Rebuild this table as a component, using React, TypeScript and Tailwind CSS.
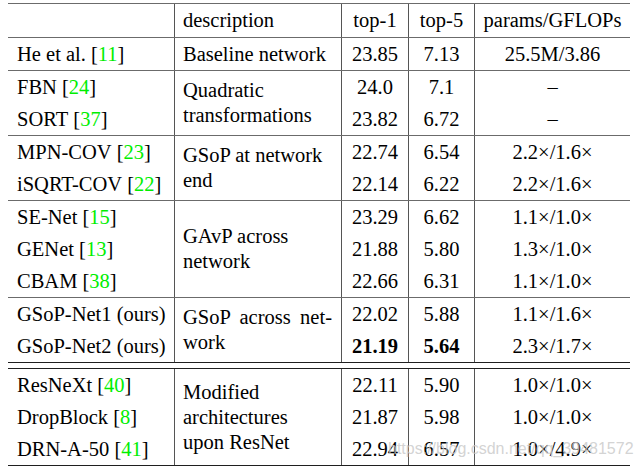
import React from "react";

type Row = {
  name: string;
  cite?: string;
  top1: string;
  top5: string;
  params: string;
  bold?: boolean;
};

type Group = {
  rows: Row[];
  desc: string[];
  justifyFirst?: boolean;
};

const groups: Group[] = [
  {
    rows: [{ name: "He et al.", cite: "11", top1: "23.85", top5: "7.13", params: "25.5M/3.86" }],
    desc: ["Baseline network"],
  },
  {
    rows: [
      { name: "FBN", cite: "24", top1: "24.0", top5: "7.1", params: "–" },
      { name: "SORT", cite: "37", top1: "23.82", top5: "6.72", params: "–" },
    ],
    desc: ["Quadratic", "transformations"],
  },
  {
    rows: [
      { name: "MPN-COV", cite: "23", top1: "22.74", top5: "6.54", params: "2.2×/1.6×" },
      { name: "iSQRT-COV", cite: "22", top1: "22.14", top5: "6.22", params: "2.2×/1.6×" },
    ],
    desc: ["GSoP at network", "end"],
  },
  {
    rows: [
      { name: "SE-Net", cite: "15", top1: "23.29", top5: "6.62", params: "1.1×/1.0×" },
      { name: "GENet", cite: "13", top1: "21.88", top5: "5.80", params: "1.3×/1.0×" },
      { name: "CBAM", cite: "38", top1: "22.66", top5: "6.31", params: "1.1×/1.0×" },
    ],
    desc: ["GAvP across", "network"],
  },
  {
    rows: [
      { name: "GSoP-Net1 (ours)", top1: "22.02", top5: "5.88", params: "1.1×/1.6×" },
      { name: "GSoP-Net2 (ours)", top1: "21.19", top5: "5.64", params: "2.3×/1.7×", bold: true },
    ],
    desc: ["GSoP across net-", "work"],
    justifyFirst: true,
  },
];

const modified: Group = {
  rows: [
    { name: "ResNeXt", cite: "40", top1: "22.11", top5: "5.90", params: "1.0×/1.0×" },
    { name: "DropBlock", cite: "8", top1: "21.87", top5: "5.98", params: "1.0×/1.0×" },
    { name: "DRN-A-50", cite: "41", top1: "22.94", top5: "6.57", params: "1.0×/4.9×" },
  ],
  desc: ["Modified", "architectures", "upon ResNet"],
};

function Section({ group, last }: { group: Group; last?: boolean }) {
  const rule = last ? "border-[#1f1f1f]" : "border-[#6b6b6b]";
  return (
    <div className={`flex border-b ${rule}`}>
      <div className="w-[167px] border-r border-[#555]">
        {group.rows.map((r) => (
          <div key={r.name} className="h-8 flex items-center pl-[9px] whitespace-nowrap">
            {r.name}
            {r.cite && (
              <>
                &nbsp;[<span className="text-[#00ee00]">{r.cite}</span>]
              </>
            )}
          </div>
        ))}
      </div>
      <div className="w-[167px] border-r border-[#555] flex flex-col justify-center pl-[8px] pr-[9px] leading-[25px]">
        {group.desc.map((line, i) => (
          <div
            key={line}
            className={
              group.justifyFirst && i === 0
                ? "text-justify [text-align-last:justify] whitespace-nowrap"
                : "whitespace-nowrap"
            }
          >
            {line}
          </div>
        ))}
      </div>
      <div className="w-[67px] border-r border-[#555]">
        {group.rows.map((r) => (
          <div key={r.name} className={`h-8 flex items-center justify-center ${r.bold ? "font-bold" : ""}`}>
            {r.top1}
          </div>
        ))}
      </div>
      <div className="w-[66px] border-r border-[#555]">
        {group.rows.map((r) => (
          <div key={r.name} className={`h-8 flex items-center justify-center ${r.bold ? "font-bold" : ""}`}>
            {r.top5}
          </div>
        ))}
      </div>
      <div className="w-[155px]">
        {group.rows.map((r) => (
          <div key={r.name} className="h-8 flex items-center justify-center">
            {r.params}
          </div>
        ))}
      </div>
    </div>
  );
}

export default function App() {
  return (
    <div className="relative w-[641px] h-[471px] bg-white overflow-hidden pt-[3px] pl-[8px] font-['Liberation_Serif',serif] text-[20.5px] text-black">
      <div className="w-[622px] border-t border-[#6b6b6b]">
        {/* header */}
        <div className="flex h-[34px] border-b border-[#6b6b6b]">
          <div className="w-[167px] border-r border-[#555]" />
          <div className="w-[167px] border-r border-[#555] flex items-center pl-[8px]">description</div>
          <div className="w-[67px] border-r border-[#555] flex items-center justify-center">top-1</div>
          <div className="w-[66px] border-r border-[#555] flex items-center justify-center">top-5</div>
          <div className="w-[155px] flex items-center justify-center">params/GFLOPs</div>
        </div>

        {groups.map((g, i) => (
          <Section key={i} group={g} last={i === groups.length - 1} />
        ))}

        {/* double rule gap */}
        <div className="h-[6px] border-b border-[#1f1f1f]" />

        <Section group={modified} last />
      </div>

      {/* csdn watermark */}
      <div className="absolute left-[388px] top-[440px] font-['Liberation_Sans',sans-serif] text-[16px] leading-[18px] text-[#c8c8c8]/80 whitespace-nowrap">
        https://blog.csdn.net/qq_39481572
      </div>
    </div>
  );
}
